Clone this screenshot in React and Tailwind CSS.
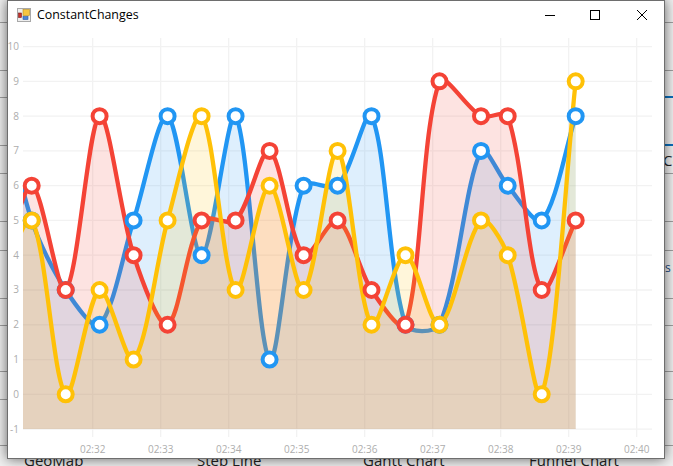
import React from 'react';

const xs = [31.7, 65.7, 99.6, 133.6, 167.6, 201.6, 235.6, 269.6, 303.6, 337.6, 371.5, 405.5, 439.5, 481, 507.7, 541.7, 575.7];

const series = [
  { color: '#2196F3', start: 9, values: [5, 3, 2, 5, 8, 4, 8, 1, 6, 6, 8, 2, 2, 7, 6, 5, 8] },
  { color: '#F44336', start: 3, values: [6, 3, 8, 4, 2, 5, 5, 7, 4, 5, 3, 2, 9, 8, 8, 3, 5] },
  { color: '#FFC107', start: 3, values: [5, 0, 3, 1, 5, 8, 3, 6, 3, 7, 2, 4, 2, 5, 4, 0, 9] },
];

const yOf = (v) => 394.3 - v * 34.77;
const baseY = yOf(-1);
const smoothness = 0.6;
const yTicks = [-1, 0, 1, 2, 3, 4, 5, 6, 7, 8, 9, 10];
const xTicks = ['02:32', '02:33', '02:34', '02:35', '02:36', '02:37', '02:38', '02:39', '02:40'];

// rows of the app behind the window, they only peek out at both sides
const gray = 'border-b border-[#a0a0a0]';
const blue = 'border-b-2 border-[#0a6ebd]';
const backRows = [
  { h: 'h-[23px]', right: gray },
  { h: 'h-[48px]', right: gray },
  { h: 'h-[27px]', right: blue },
  { h: 'h-[48px]', right: blue },
  { h: 'h-[28px]', right: gray, text: 'Co', cls: 'text-[15px] text-[#222] -ml-[2px] pt-[4px] leading-[20px]' },
  { h: 'h-[48px]', right: gray },
  { h: 'h-[29px]', right: gray },
  { h: 'h-[48px]', right: gray, text: 's', cls: 'text-[12px] text-[#1c4a80] leading-[16px] pt-[9px]' },
  { h: 'h-[27px]', right: gray },
  { h: 'h-[46px]', right: gray },
  { h: 'h-[28px]', right: gray },
  { h: 'h-[46px]', right: gray },
];

// same control point maths the charting lib uses
function buildPath(points) {
  let d = `M${points[0][0]} ${points[0][1]}`;
  for (let i = 0; i < points.length - 1; i++) {
    const p0 = points[i - 1] || points[i];
    const p1 = points[i];
    const p2 = points[i + 1];
    const p3 = points[i + 2] || p2;
    const xc1 = (p0[0] + p1[0]) / 2;
    const yc1 = (p0[1] + p1[1]) / 2;
    const xc2 = (p1[0] + p2[0]) / 2;
    const yc2 = (p1[1] + p2[1]) / 2;
    const xc3 = (p2[0] + p3[0]) / 2;
    const yc3 = (p2[1] + p3[1]) / 2;
    const len1 = Math.hypot(p1[0] - p0[0], p1[1] - p0[1]);
    const len2 = Math.hypot(p2[0] - p1[0], p2[1] - p1[1]);
    const len3 = Math.hypot(p3[0] - p2[0], p3[1] - p2[1]);
    const k1 = len1 + len2 === 0 ? 0 : len1 / (len1 + len2);
    const k2 = len2 + len3 === 0 ? 0 : len2 / (len2 + len3);
    const xm1 = xc1 + (xc2 - xc1) * k1;
    const ym1 = yc1 + (yc2 - yc1) * k1;
    const xm2 = xc2 + (xc3 - xc2) * k2;
    const ym2 = yc2 + (yc3 - yc2) * k2;
    const c1x = xm1 + (xc2 - xm1) * smoothness + p1[0] - xm1;
    const c1y = ym1 + (yc2 - ym1) * smoothness + p1[1] - ym1;
    const c2x = xm2 + (xc2 - xm2) * smoothness + p2[0] - xm2;
    const c2y = ym2 + (yc2 - ym2) * smoothness + p2[1] - ym2;
    d += ` C${c1x} ${c1y} ${c2x} ${c2y} ${p2[0]} ${p2[1]}`;
  }
  return d;
}

function Chart() {
  return (
    <svg width="656" height="429" viewBox="8 29 656 429" className="block">
      <defs>
        <clipPath id="plot">
          <rect x="23" y="30" width="640" height="400" />
        </clipPath>
      </defs>
      {yTicks.map((t) => (
        <g key={t}>
          <line x1="23" x2="652" y1={yOf(t)} y2={yOf(t)} stroke="#f2f2f2" strokeWidth="1.3" />
          <text x="19" y={yOf(t) + 3.5} textAnchor="end" fontSize="10" fill="#adadad" fontFamily="Open Sans, sans-serif">{t}</text>
        </g>
      ))}
      {xTicks.map((t, i) => (
        <g key={t}>
          <line x1={92.7 + i * 68} x2={92.7 + i * 68} y1="38" y2="437" stroke="#f2f2f2" strokeWidth="1.3" />
          <text x={92.7 + i * 68} y="452.5" textAnchor="middle" fontSize="10" fill="#adadad" fontFamily="Open Sans, sans-serif">{t}</text>
        </g>
      ))}
      <g clipPath="url(#plot)">
        {series.map((s) => {
          const pts = [[-3, yOf(s.start)], ...s.values.map((v, i) => [xs[i], yOf(v)])];
          const line = buildPath(pts);
          return (
            <g key={s.color}>
              <path d={`${line} L575.7 ${baseY} L-3 ${baseY} Z`} fill={s.color} fillOpacity="0.15" />
              <path d={line} fill="none" stroke={s.color} strokeWidth="4.3" />
            </g>
          );
        })}
      </g>
      {series.map((s) =>
        s.values.map((v, i) => (
          <circle key={s.color + i} cx={xs[i]} cy={yOf(v)} r="7" fill="#fff" stroke={s.color} strokeWidth="4" />
        ))
      )}
    </svg>
  );
}

function AppIcon() {
  return (
    <svg width="14" height="14" viewBox="0 0 14 14" className="shrink-0">
      <rect x="0.5" y="0.5" width="13" height="13" fill="#eeeeee" stroke="#a8a8a8" />
      <rect x="6" y="1.5" width="6.5" height="6" fill="#f5c542" stroke="#b58a1c" strokeWidth="0.6" />
      <rect x="1.5" y="5" width="3" height="4.5" fill="#c8302a" stroke="#7a1c18" strokeWidth="0.6" />
      <rect x="6" y="8.5" width="5" height="3" fill="#4a84d8" stroke="#2a5aa0" strokeWidth="0.6" />
    </svg>
  );
}

export default function App() {
  return (
    <div className="relative w-[673px] h-[466px] overflow-hidden bg-[#f0f0f0] font-['Open_Sans',sans-serif]">
      {/* app sitting behind the window */}
      <div className="flex flex-col h-full">
        {backRows.map((row, i) => (
          <div key={i} className={`${row.h} flex justify-between shrink-0`}>
            <div className="w-2 border-b border-[#a0a0a0]" />
            <div className={`w-2 ${row.right}`}>
              {row.text && <span className={`block whitespace-nowrap ${row.cls}`}>{row.text}</span>}
            </div>
          </div>
        ))}
        <div className="grid grid-cols-[173px_166px_166px_1fr] pt-[4px] pl-[24px] text-[15px] leading-[20px] text-[#222] whitespace-nowrap">
          <span>GeoMap</span>
          <span>Step Line</span>
          <span>Gantt Chart</span>
          <span>Funnel Chart</span>
        </div>
      </div>

      {/* the window itself */}
      <div className="absolute left-[7px] top-0 w-[658px] h-[459px] bg-white border border-[#6e6e6e] shadow-[0_0_12px_rgba(0,0,0,0.6)] flex flex-col">
        <div className="h-7 flex items-center shrink-0 pl-[9px]">
          <AppIcon />
          <span className="ml-1.5 text-[12.4px] text-black">ConstantChanges</span>
          <div className="ml-auto flex items-center">
            <svg width="46" height="28" viewBox="0 0 46 28"><path d="M19 14.5h10" stroke="#000" strokeWidth="1" /></svg>
            <svg width="46" height="28" viewBox="0 0 46 28"><rect x="18.5" y="9.5" width="9" height="9" fill="none" stroke="#000" /></svg>
            <svg width="46" height="28" viewBox="0 0 46 28"><path d="M19 9l10 10M29 9l-10 10" stroke="#000" strokeWidth="1" /></svg>
          </div>
        </div>
        <Chart />
      </div>
    </div>
  );
}
